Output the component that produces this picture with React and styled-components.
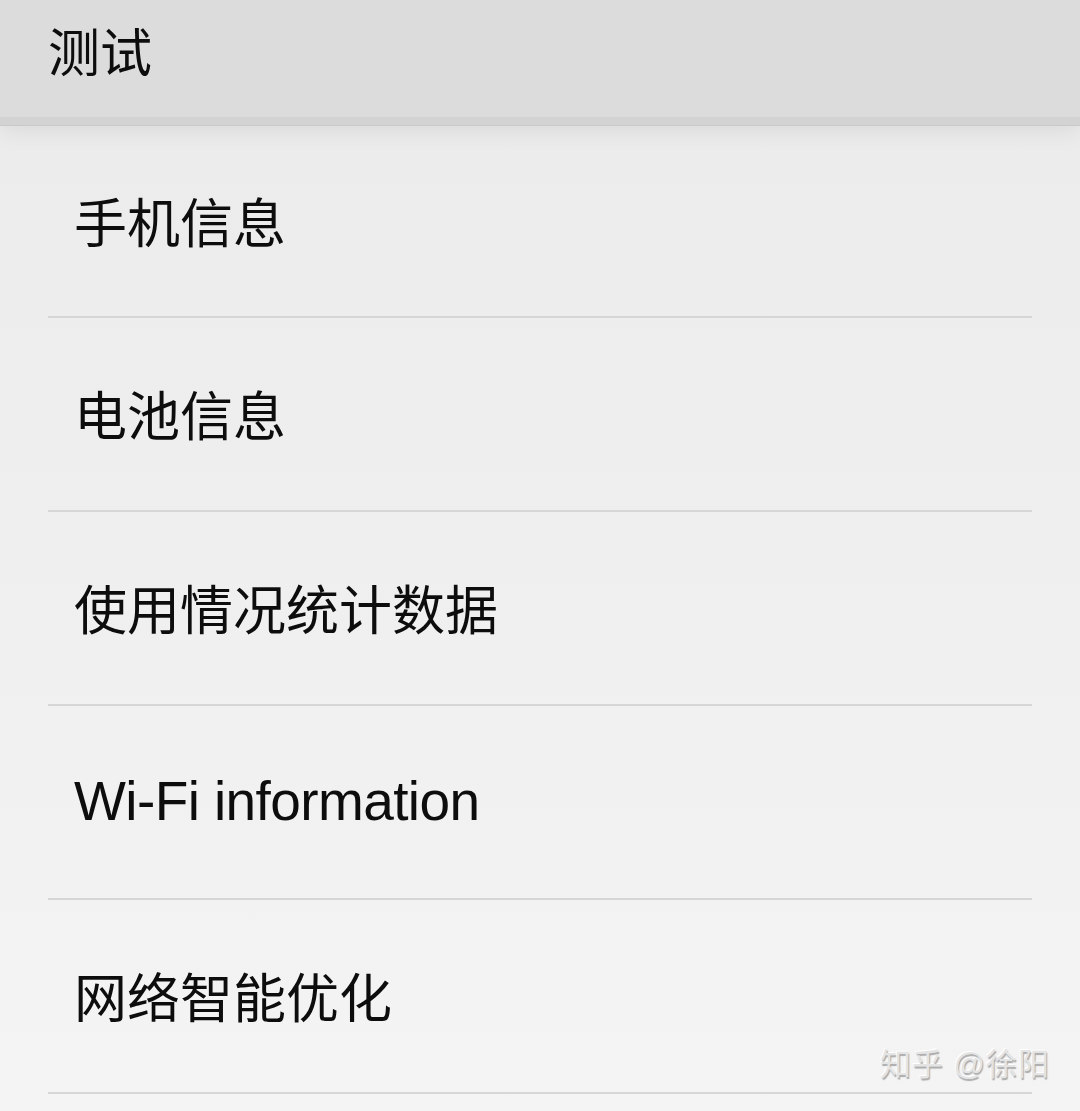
import styled, { createGlobalStyle } from "styled-components";

const GlobalStyle = createGlobalStyle`
    html, body {
        margin: 0;
        padding: 0;
        background: #efefef;
    }
    body {
        font-family: "Liberation Sans", "Noto Sans CJK SC", sans-serif;
    }
`;

const Screen = styled.div`
    position: relative;
    width: 1080px;
    height: 1111px;
    overflow: hidden;
    background: linear-gradient(#ebebeb 0%, #eeeeee 40%, #f4f4f4 100%);
`;

const Header = styled.header`
    position: relative;
    z-index: 1;
    height: 125px;
    display: flex;
    align-items: center;
    padding: 0 0 18px 48px;
    box-sizing: border-box;
    background: #dcdcdc;
    border-bottom: 8px solid #d3d3d3;
    box-shadow: 0 1px 0 #c9c9c9, 0 6px 22px rgba(0, 0, 0, 0.08);
    h1 {
        margin: 0;
        font-size: 52px;
        font-weight: normal;
        color: #0d0d0d;
    }
`;

const List = styled.ul`
    list-style: none;
    margin: 0;
    padding: 0 48px;
`;

const Row = styled.li`
    box-sizing: border-box;
    height: 194px;
    display: flex;
    align-items: center;
    padding: 0 0 2px 26px;
    border-bottom: 2px solid #d6d6d6;
    font-size: ${props => (props.latin ? "55px" : "53px")};
    color: #0d0d0d;
    letter-spacing: ${props => (props.latin ? "-0.6px" : "0")};
    &:first-child {
        height: 193px;
    }
`;

const Watermark = styled.div`
    position: absolute;
    right: 30px;
    bottom: 27px;
    font-size: 31px;
    color: #e4e4e4;
    letter-spacing: 1px;
    text-shadow: 1px 2px 1px rgba(0, 0, 0, 0.3), -1px -1px 0 #fff;
`;

const items = [
    { label: "手机信息" },
    { label: "电池信息" },
    { label: "使用情况统计数据" },
    { label: "Wi-Fi information", latin: true },
    { label: "网络智能优化" },
];

export default function App() {
    return (
        <Screen>
            <GlobalStyle />
            <Header>
                <h1>测试</h1>
            </Header>
            <List>
                {items.map(item => (
                    <Row key={item.label} latin={item.latin}>{item.label}</Row>
                ))}
            </List>
            <Watermark>知乎 @徐阳</Watermark>
        </Screen>
    );
}
